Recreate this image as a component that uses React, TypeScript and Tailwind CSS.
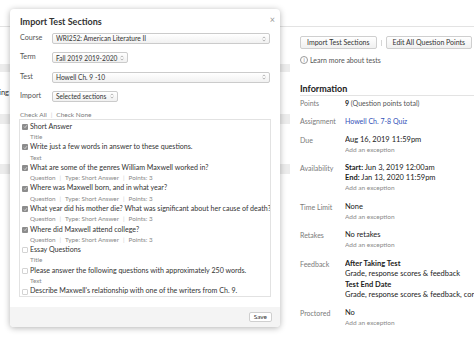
import React from 'react'

type Item = { title: string; sub: string[]; checked: boolean }

const items: Item[] = [
  { title: 'Short Answer', sub: ['Title'], checked: true },
  { title: 'Write just a few words in answer to these questions.', sub: ['Text'], checked: true },
  { title: 'What are some of the genres William Maxwell worked in?', sub: ['Question', 'Type: Short Answer', 'Points: 3'], checked: true },
  { title: 'Where was Maxwell born, and in what year?', sub: ['Question', 'Type: Short Answer', 'Points: 3'], checked: true },
  { title: 'What year did his mother die? What was significant about her cause of death?', sub: ['Question', 'Type: Short Answer', 'Points: 3'], checked: true },
  { title: 'Where did Maxwell attend college?', sub: ['Question', 'Type: Short Answer', 'Points: 3'], checked: true },
  { title: 'Essay Questions', sub: ['Title'], checked: false },
  { title: 'Please answer the following questions with approximately 250 words.', sub: ['Text'], checked: false },
  { title: "Describe Maxwell's relationship with one of the writers from Ch. 9.", sub: ['Question', 'Type: Essay', 'Points: 10'], checked: false },
]

function Arrows() {
  return (
    <svg width="4" height="6" viewBox="0 0 4 6" className="shrink-0">
      <path d="M0.6 2.3 L2 0.9 L3.4 2.3 M0.6 3.7 L2 5.1 L3.4 3.7" fill="none" stroke="#999" strokeWidth="0.7" />
    </svg>
  )
}

function Select({ text, width }: { text: string; width: string }) {
  return (
    <div className={`${width} h-[11px] flex items-center justify-between pl-[3px] pr-[3px] border border-[#cbcbcb] rounded-[2px] bg-gradient-to-b from-white to-[#f1f1f1] text-[6.6px] text-[#333]`}>
      <span className="leading-none whitespace-nowrap">{text}</span>
      <Arrows />
    </div>
  )
}

function Check({ on }: { on: boolean }) {
  if (!on) return <div className="w-[6px] h-[6px] border border-[#d3d3d3] rounded-[1px] bg-white shrink-0" />
  return (
    <div className="w-[6px] h-[6px] rounded-[1px] bg-[#8c8c8c] shrink-0 flex items-center justify-center">
      <svg width="5" height="5" viewBox="0 0 5 5">
        <path d="M1 2.6 L2 3.6 L4 1.2" fill="none" stroke="#e6e6e6" strokeWidth="0.8" />
      </svg>
    </div>
  )
}

function InfoRow({ label, children }: { label: string; children: React.ReactNode }) {
  return (
    <div className="flex mb-[8.5px]">
      <div className="w-[45px] shrink-0 text-[#7a7a7a] text-[7px] leading-[10px]">{label}</div>
      <div className="flex-1 min-w-0 whitespace-nowrap overflow-hidden">{children}</div>
    </div>
  )
}

const Exception = () => <div className="text-[6.5px] leading-[10px] text-[#8a8a8a]">Add an exception</div>

export default function App() {
  return (
    <div className="w-[474px] h-[339px] relative overflow-hidden bg-white font-['Lato',sans-serif]">
      {/* page behind */}
      <div className="h-[27px] border-b border-[#e3e3e3]" />
      <div className="flex">
        <div className="w-[290px] shrink-0 pt-[37px]">
          <div className="h-[8px] bg-[#ececec]" />
          <div className="h-[16px]" />
          <div className="w-[9px] flex justify-end text-[7.5px] text-[#333] leading-[10px] whitespace-nowrap">Testing</div>
          <div className="h-[16px]" />
          <div className="h-[10px] bg-[#ececec]" />
          <div className="h-[40px]" />
          <div className="h-[10px] bg-[#ececec]" />
        </div>

        <div className="flex-1 min-w-0 overflow-hidden pl-[10px] pt-[9px] text-[#222]">
          <div className="flex items-center">
            <div className="h-[13px] px-[6px] flex items-center border border-[#cfcfcf] rounded-[2px] bg-gradient-to-b from-white to-[#f0f0f0] text-[7px] text-[#333] whitespace-nowrap">Import Test Sections</div>
            <div className="mx-[4px] w-px h-[6px] bg-[#d6d6d6]" />
            <div className="h-[13px] px-[6px] flex items-center border border-[#cfcfcf] rounded-[2px] bg-gradient-to-b from-white to-[#f0f0f0] text-[7px] text-[#333] whitespace-nowrap">Edit All Question Points</div>
          </div>
          <div className="flex items-center mt-[6px] text-[7px] text-[#555]">
            <div className="w-[8px] h-[8px] rounded-full border border-[#9a9a9a] flex items-center justify-center text-[5px] text-[#777] mr-[2px] leading-none">i</div>
            Learn more about tests
          </div>

          <div className="mt-[17px] text-[9px] font-bold leading-[12px] text-[#222]">Information</div>
          <div className="border-b border-[#e3e3e3] mb-[2px]" />

          <InfoRow label="Points">
            <div className="text-[7px] leading-[10px] text-[#555]"><span className="font-bold text-[#222]">9</span> (Question points total)</div>
          </InfoRow>
          <InfoRow label="Assignment">
            <div className="text-[7px] leading-[10px] text-[#3150b8]">Howell Ch. 7-8 Quiz</div>
          </InfoRow>
          <InfoRow label="Due">
            <div className="text-[7.5px] leading-[10px]">Aug 16, 2019 11:59pm</div>
            <Exception />
          </InfoRow>
          <InfoRow label="Availability">
            <div className="text-[7.5px] leading-[10px]"><span className="font-bold">Start:</span> Jun 3, 2019 12:00am</div>
            <div className="text-[7.5px] leading-[10px]"><span className="font-bold">End:</span> Jan 13, 2020 11:59pm</div>
            <Exception />
          </InfoRow>
          <InfoRow label="Time Limit">
            <div className="text-[7.5px] leading-[10px]">None</div>
            <Exception />
          </InfoRow>
          <InfoRow label="Retakes">
            <div className="text-[7.5px] leading-[10px]">No retakes</div>
            <Exception />
          </InfoRow>
          <InfoRow label="Feedback">
            <div className="text-[7.5px] leading-[10px] font-bold">After Taking Test</div>
            <div className="text-[7.5px] leading-[10px]">Grade, response scores &amp; feedback</div>
            <div className="text-[7.5px] leading-[10px] font-bold mt-[1px]">Test End Date</div>
            <div className="text-[7.5px] leading-[10px]">Grade, response scores &amp; feedback, correct answers</div>
          </InfoRow>
          <InfoRow label="Proctored">
            <div className="text-[7.5px] leading-[10px]">No</div>
            <Exception />
          </InfoRow>
        </div>
      </div>

      {/* modal */}
      <div className="absolute left-[10px] top-[9px] w-[270px] h-[318px] bg-white rounded-[4px] shadow-[0_1px_6px_rgba(0,0,0,0.3)] flex flex-col overflow-hidden">
        <div className="flex-1 pl-[10px] pr-[10px] pt-[7px]">
          <div className="flex justify-between items-center h-[12px]">
            <div className="text-[9px] font-bold text-[#333]">Import Test Sections</div>
            <div className="text-[9px] text-[#999] leading-none -mt-[5px] -mr-[5px]">×</div>
          </div>

          <div className="mt-[5px] flex flex-col gap-[8.3px]">
            <div className="flex items-center h-[11px]">
              <div className="w-[32px] text-[7.2px] text-[#555]">Course</div>
              <Select text="WRI252: American Literature II" width="flex-1" />
            </div>
            <div className="flex items-center h-[11px]">
              <div className="w-[32px] text-[7.2px] text-[#555]">Term</div>
              <Select text="Fall 2019 2019-2020" width="w-[76px]" />
            </div>
            <div className="flex items-center h-[11px]">
              <div className="w-[32px] text-[7.2px] text-[#555]">Test</div>
              <Select text="Howell Ch. 9 -10" width="flex-1" />
            </div>
            <div className="flex items-center h-[11px]">
              <div className="w-[32px] text-[7.2px] text-[#555]">Import</div>
              <Select text="Selected sections" width="w-[66px]" />
            </div>
          </div>

          <div className="mt-[8px] flex items-center text-[6.5px] text-[#7a7a7a] leading-[9px]">
            <span>Check All</span>
            <span className="mx-[4px] text-[#ccc]">|</span>
            <span>Check None</span>
          </div>

          <div className="ml-[-1px] mr-[-1px] h-[178px] border border-[#e2e2e2] overflow-hidden pt-[2px] pl-[2px]">
            {items.map((it) => (
              <div key={it.title} className="mb-[1.1px]">
                <div className="flex items-center gap-[2px] h-[10px]">
                  <Check on={it.checked} />
                  <div className="text-[7.1px] text-[#333] whitespace-nowrap">{it.title}</div>
                </div>
                <div className="pl-[8px] h-[9.5px] flex items-center text-[6.3px] text-[#888] whitespace-nowrap">
                  {it.sub.map((s, i) => (
                    <span key={s} className="flex items-center">
                      {i > 0 && <span className="mx-[4px] text-[#cfcfcf]">|</span>}
                      {s}
                    </span>
                  ))}
                </div>
              </div>
            ))}
          </div>
        </div>

        <div className="h-[20px] bg-[#f4f4f4] flex items-center justify-end pr-[8px]">
          <div className="h-[10px] px-[4px] flex items-center border border-[#cfcfcf] rounded-[2px] bg-white text-[6.5px] text-[#333]">Save</div>
        </div>
      </div>
    </div>
  )
}
